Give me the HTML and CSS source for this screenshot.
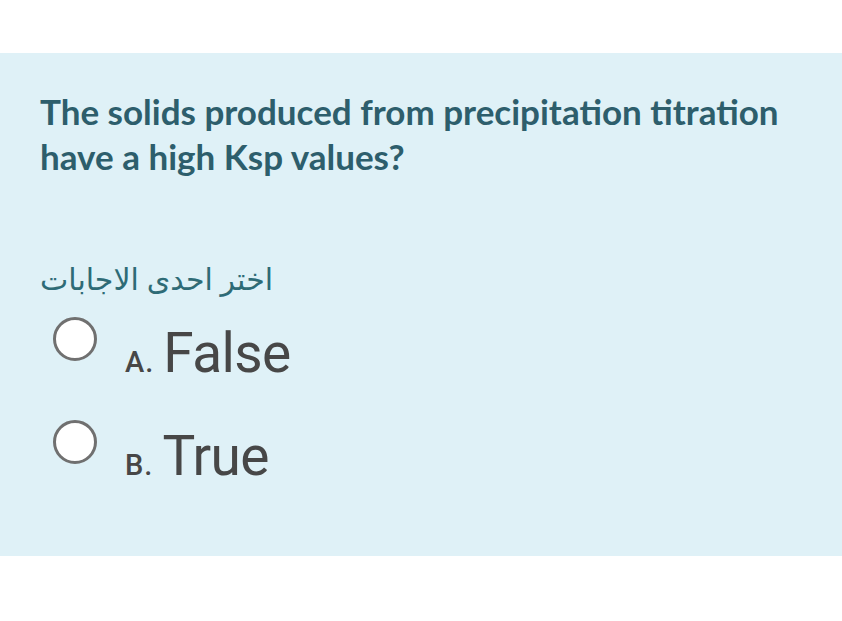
FILE: index.html
```html
<!DOCTYPE html>
<html lang="en">
<head>
<meta charset="utf-8">
<link rel="stylesheet" href="styles.css">
</head>
<body>
<div class="panel">
  <h1 class="question">The solids produced from precipitation titration have a high Ksp values?</h1>
  <div class="prompt" dir="rtl" lang="ar">اختر احدى الاجابات</div>
  <div class="options">
    <div class="option">
      <span class="radio"></span>
      <span class="label"><span class="letter">A.</span><span class="answer">False</span></span>
    </div>
    <div class="option">
      <span class="radio"></span>
      <span class="label"><span class="letter">B.</span><span class="answer">True</span></span>
    </div>
  </div>
</div>
</body>
</html>
```
FILE: styles.css
```css
html, body {
  margin: 0;
  padding: 0;
  background: #ffffff;
}
body {
  padding-top: 53px;
  height: 621px;
  box-sizing: border-box;
}
.panel {
  background: #dff1f7;
  height: 503px;
  box-sizing: border-box;
  padding: 36px 40px 0 40px;
}
.question {
  margin: 0;
  font-family: Lato, "Open Sans", sans-serif;
  font-weight: 700;
  font-size: 35px;
  line-height: 45px;
  color: #2d5e6c;
  width: 780px;
}
.prompt {
  margin-top: 80px;
  font-family: "Noto Sans", "DejaVu Sans", sans-serif;
  font-weight: 500;
  font-size: 30px;
  line-height: 40px;
  color: #2e6b76;
  text-align: left;
  width: 248px;
}
.options {
  display: flex;
  flex-direction: column;
  gap: 59px;
  margin-top: 18px;
  padding-left: 13px;
}
.option {
  display: flex;
  align-items: flex-start;
  gap: 28px;
  height: 44px;
}
.radio {
  width: 38px;
  height: 38px;
  border: 3px solid #707070;
  border-radius: 50%;
  background: #ffffff;
  flex: none;
}
.label {
  margin-top: 9px;
  font-family: Roboto, "Liberation Sans", sans-serif;
  color: #474747;
  display: flex;
  align-items: baseline;
  gap: 9px;
  line-height: 1;
}
.letter {
  font-size: 29px;
  font-weight: 500;
  letter-spacing: 1px;
}
.answer {
  font-size: 55px;
  letter-spacing: -0.6px;
}
```
